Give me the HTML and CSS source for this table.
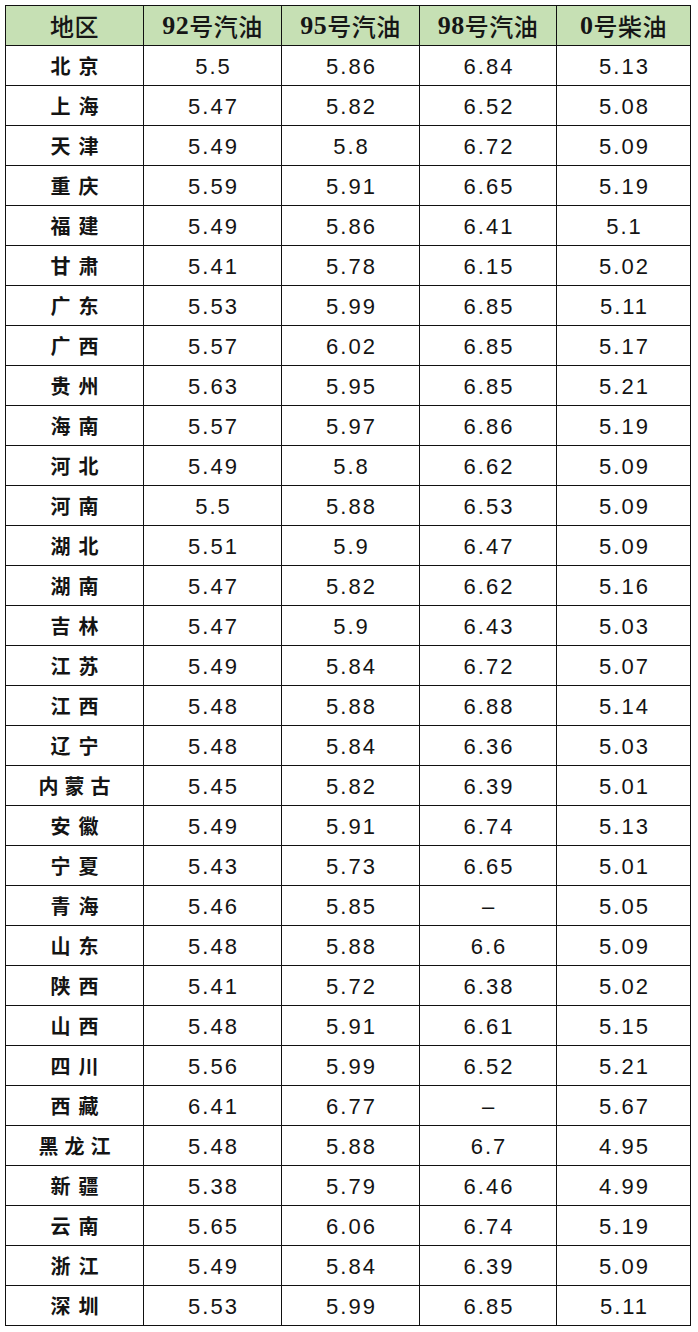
FILE: index.html
```html
<!DOCTYPE html>
<html lang="zh-CN">
<head>
<meta charset="utf-8">
<title>油价表</title>
<link rel="stylesheet" href="styles.css">
</head>
<body>
<div class="sheet">
  <div class="hd">地区</div><div class="hd"><span class="lat">92</span>号汽油</div><div class="hd"><span class="lat">95</span>号汽油</div><div class="hd"><span class="lat">98</span>号汽油</div><div class="hd"><span class="lat">0</span>号柴油</div>
  <div class="rg">北京</div><div class="nm">5.5</div><div class="nm">5.86</div><div class="nm">6.84</div><div class="nm">5.13</div>
  <div class="rg">上海</div><div class="nm">5.47</div><div class="nm">5.82</div><div class="nm">6.52</div><div class="nm">5.08</div>
  <div class="rg">天津</div><div class="nm">5.49</div><div class="nm">5.8</div><div class="nm">6.72</div><div class="nm">5.09</div>
  <div class="rg">重庆</div><div class="nm">5.59</div><div class="nm">5.91</div><div class="nm">6.65</div><div class="nm">5.19</div>
  <div class="rg">福建</div><div class="nm">5.49</div><div class="nm">5.86</div><div class="nm">6.41</div><div class="nm">5.1</div>
  <div class="rg">甘肃</div><div class="nm">5.41</div><div class="nm">5.78</div><div class="nm">6.15</div><div class="nm">5.02</div>
  <div class="rg">广东</div><div class="nm">5.53</div><div class="nm">5.99</div><div class="nm">6.85</div><div class="nm">5.11</div>
  <div class="rg">广西</div><div class="nm">5.57</div><div class="nm">6.02</div><div class="nm">6.85</div><div class="nm">5.17</div>
  <div class="rg">贵州</div><div class="nm">5.63</div><div class="nm">5.95</div><div class="nm">6.85</div><div class="nm">5.21</div>
  <div class="rg">海南</div><div class="nm">5.57</div><div class="nm">5.97</div><div class="nm">6.86</div><div class="nm">5.19</div>
  <div class="rg">河北</div><div class="nm">5.49</div><div class="nm">5.8</div><div class="nm">6.62</div><div class="nm">5.09</div>
  <div class="rg">河南</div><div class="nm">5.5</div><div class="nm">5.88</div><div class="nm">6.53</div><div class="nm">5.09</div>
  <div class="rg">湖北</div><div class="nm">5.51</div><div class="nm">5.9</div><div class="nm">6.47</div><div class="nm">5.09</div>
  <div class="rg">湖南</div><div class="nm">5.47</div><div class="nm">5.82</div><div class="nm">6.62</div><div class="nm">5.16</div>
  <div class="rg">吉林</div><div class="nm">5.47</div><div class="nm">5.9</div><div class="nm">6.43</div><div class="nm">5.03</div>
  <div class="rg">江苏</div><div class="nm">5.49</div><div class="nm">5.84</div><div class="nm">6.72</div><div class="nm">5.07</div>
  <div class="rg">江西</div><div class="nm">5.48</div><div class="nm">5.88</div><div class="nm">6.88</div><div class="nm">5.14</div>
  <div class="rg">辽宁</div><div class="nm">5.48</div><div class="nm">5.84</div><div class="nm">6.36</div><div class="nm">5.03</div>
  <div class="rg rg3">内蒙古</div><div class="nm">5.45</div><div class="nm">5.82</div><div class="nm">6.39</div><div class="nm">5.01</div>
  <div class="rg">安徽</div><div class="nm">5.49</div><div class="nm">5.91</div><div class="nm">6.74</div><div class="nm">5.13</div>
  <div class="rg">宁夏</div><div class="nm">5.43</div><div class="nm">5.73</div><div class="nm">6.65</div><div class="nm">5.01</div>
  <div class="rg">青海</div><div class="nm">5.46</div><div class="nm">5.85</div><div class="nm">–</div><div class="nm">5.05</div>
  <div class="rg">山东</div><div class="nm">5.48</div><div class="nm">5.88</div><div class="nm">6.6</div><div class="nm">5.09</div>
  <div class="rg">陕西</div><div class="nm">5.41</div><div class="nm">5.72</div><div class="nm">6.38</div><div class="nm">5.02</div>
  <div class="rg">山西</div><div class="nm">5.48</div><div class="nm">5.91</div><div class="nm">6.61</div><div class="nm">5.15</div>
  <div class="rg">四川</div><div class="nm">5.56</div><div class="nm">5.99</div><div class="nm">6.52</div><div class="nm">5.21</div>
  <div class="rg">西藏</div><div class="nm">6.41</div><div class="nm">6.77</div><div class="nm">–</div><div class="nm">5.67</div>
  <div class="rg rg3">黑龙江</div><div class="nm">5.48</div><div class="nm">5.88</div><div class="nm">6.7</div><div class="nm">4.95</div>
  <div class="rg">新疆</div><div class="nm">5.38</div><div class="nm">5.79</div><div class="nm">6.46</div><div class="nm">4.99</div>
  <div class="rg">云南</div><div class="nm">5.65</div><div class="nm">6.06</div><div class="nm">6.74</div><div class="nm">5.19</div>
  <div class="rg">浙江</div><div class="nm">5.49</div><div class="nm">5.84</div><div class="nm">6.39</div><div class="nm">5.09</div>
  <div class="rg">深圳</div><div class="nm">5.53</div><div class="nm">5.99</div><div class="nm">6.85</div><div class="nm">5.11</div>
</div>
</body>
</html>
```

FILE: styles.css
```css
html, body {
  margin: 0;
  padding: 0;
  background: #ffffff;
}
body {
  padding: 5px 0 0 5px;
}
.sheet {
  display: grid;
  grid-template-columns: 137px 137px 137px 136px 133px;
  grid-auto-rows: 39px;
  gap: 1px;
  padding: 1px;
  background: #111111;
  width: max-content;
}
.sheet > div {
  display: flex;
  align-items: center;
  justify-content: center;
  background: #ffffff;
  color: #141414;
}
.sheet > .hd {
  background: #c6e0b4;
  font-family: "Noto Sans CJK SC", serif;
  font-weight: 500;
  font-size: 24px;
  letter-spacing: 0.5px;
  color: #161616;
}
.lat {
  font-family: "Liberation Serif", serif;
  font-weight: 700;
  font-size: 26px;
}
.rg {
  font-family: "Noto Sans CJK SC", sans-serif;
  font-weight: 700;
  font-size: 20px;
  letter-spacing: 8px;
  text-indent: 8px;
}
.rg3 {
  letter-spacing: 6px;
  text-indent: 6px;
}
.nm {
  font-family: "Liberation Sans", Arial, sans-serif;
  font-size: 22px;
  letter-spacing: 2px;
  text-indent: 2px;
  padding-top: 3px;
  box-sizing: border-box;
}
```
